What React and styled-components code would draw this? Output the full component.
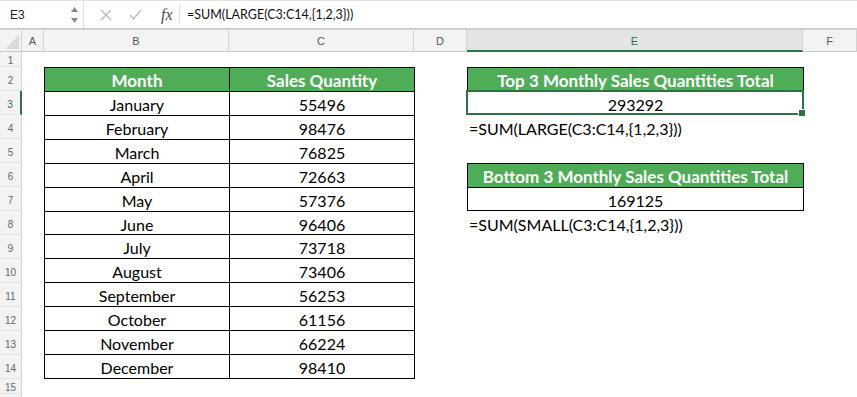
import React from "react";
import styled, { createGlobalStyle } from "styled-components";

const GlobalStyle = createGlobalStyle`
  html, body {
    margin: 0;
    padding: 0;
    background: #ffffff;
    overflow: hidden;
  }
  body {
    font-family: Lato, "Liberation Sans", sans-serif;
  }
`;

const months = [
  ["January", 55496],
  ["February", 98476],
  ["March", 76825],
  ["April", 72663],
  ["May", 57376],
  ["June", 96406],
  ["July", 73718],
  ["August", 73406],
  ["September", 56253],
  ["October", 61156],
  ["November", 66224],
  ["December", 98410],
];

const columns = ["A", "B", "C", "D", "E", "F"];
const rows = Array.from({ length: 16 }, (_, i) => i + 1);

export default function App() {
  return (
    <Page>
      <GlobalStyle />
      <FormulaBar>
        <NameBox>
          <span>E3</span>
          <Spinner width="9" height="18" viewBox="0 0 9 18">
            <path d="M4.5 1 L8 6 L1 6 Z" fill="#8a8a8a" />
            <path d="M4.5 17 L8 12 L1 12 Z" fill="#8a8a8a" />
          </Spinner>
        </NameBox>
        <BarIcons>
          <svg width="12" height="12" viewBox="0 0 12 12">
            <path d="M1 1 L11 11 M11 1 L1 11" stroke="#b8b8b8" strokeWidth="1.3" />
          </svg>
          <svg width="13" height="11" viewBox="0 0 13 11">
            <path d="M1 6 L4.5 10 L12 1" stroke="#b8b8b8" strokeWidth="1.3" fill="none" />
          </svg>
          <Fx>fx</Fx>
        </BarIcons>
        <FormulaText>=SUM(LARGE(C3:C14,{"{1,2,3}"}))</FormulaText>
      </FormulaBar>

      <Sheet>
        <Corner>
          <svg width="14" height="14" viewBox="0 0 14 14">
            <path d="M14 0 L14 14 L0 14 Z" fill="#d9d9d9" />
          </svg>
        </Corner>
        {columns.map((c) => (
          <ColHead key={c} $selected={c === "E"}>
            {c}
          </ColHead>
        ))}
        {rows.map((r) => (
          <RowHead key={r} $row={r + 1} $selected={r === 3}>
            {r < 16 ? r : ""}
          </RowHead>
        ))}

        <DataTable $cols="3 / 5" $rows="3 / 16" $count={13} $columns={2}>
          <HeadCell>Month</HeadCell>
          <HeadCell>Sales Quantity</HeadCell>
          {months.map(([m, q]) => (
            <React.Fragment key={m}>
              <Cell>{m}</Cell>
              <Cell>{q}</Cell>
            </React.Fragment>
          ))}
        </DataTable>

        <DataTable $cols="6 / 7" $rows="3 / 5" $count={2} $columns={1}>
          <HeadCell>Top 3 Monthly Sales Quantities Total</HeadCell>
          <Cell>293292</Cell>
        </DataTable>
        <Selection>
          <Handle />
        </Selection>
        <Formula $row={5}>=SUM(LARGE(C3:C14,{"{1,2,3}"}))</Formula>

        <DataTable $cols="6 / 7" $rows="7 / 9" $count={2} $columns={1}>
          <HeadCell>Bottom 3 Monthly Sales Quantities Total</HeadCell>
          <Cell>169125</Cell>
        </DataTable>
        <Formula $row={9}>=SUM(SMALL(C3:C14,{"{1,2,3}"}))</Formula>
      </Sheet>
    </Page>
  );
}

const Page = styled.div`
  width: 857px;
  height: 397px;
  overflow: hidden;
  background: #ffffff;
`;

const FormulaBar = styled.div`
  display: flex;
  align-items: stretch;
  border-top: 1px solid #e3e3e3;
  border-bottom: 1px solid #c9c9c9;
  box-sizing: border-box;
  height: 29px;
`;

const NameBox = styled.div`
  width: 84px;
  box-sizing: border-box;
  display: flex;
  align-items: center;
  justify-content: space-between;
  padding: 0 4px 0 10px;
  border-right: 1px solid #dcdcdc;
  font-family: "Liberation Sans", Arial, sans-serif;
  font-size: 12px;
  color: #222;
`;

const Spinner = styled.svg`
  display: block;
`;

const BarIcons = styled.div`
  width: 96px;
  box-sizing: border-box;
  display: flex;
  align-items: center;
  gap: 17px;
  padding-left: 16px;
  border-right: 1px solid #dcdcdc;
  margin: 4px 0;
`;

const Fx = styled.span`
  font-family: "Liberation Serif", serif;
  font-style: italic;
  font-size: 16px;
  color: #4a4a4a;
  margin-left: 2px;
`;

const FormulaText = styled.div`
  display: flex;
  align-items: center;
  padding-left: 7px;
  font-size: 12.5px;
  color: #111;
`;

const Sheet = styled.div`
  border-top: 1px solid #d6d6d6;
  display: grid;
  grid-template-columns: 22px 22px 185px 185px 53px 336px 54px;
  grid-template-rows: 22px 15px repeat(13, 24px) 15px 24px;
  height: 368px;
`;

const Corner = styled.div`
  grid-row: 1;
  grid-column: 1;
  background: #f3f3f3;
  border-right: 1px solid #d4d4d4;
  border-bottom: 1px solid #c8c8c8;
  display: flex;
  align-items: flex-end;
  justify-content: flex-end;
  padding: 0 2px 2px 0;
`;

const ColHead = styled.div`
  grid-row: 1;
  background: ${(p) => (p.$selected ? "#e4e4e4" : "#f3f3f3")};
  border-right: 1px solid #d4d4d4;
  border-bottom: ${(p) => (p.$selected ? "2px solid #2d7245" : "1px solid #c8c8c8")};
  display: flex;
  align-items: center;
  justify-content: center;
  font-family: "Liberation Sans", Arial, sans-serif;
  font-size: 11px;
  color: ${(p) => (p.$selected ? "#2d7245" : "#555")};
  padding-top: ${(p) => (p.$selected ? "1px" : "0")};
`;

const RowHead = styled.div`
  grid-column: 1;
  grid-row: ${(p) => p.$row};
  background: #f3f3f3;
  border-right: ${(p) => (p.$selected ? "2px solid #2d7245" : "1px solid #d4d4d4")};
  border-bottom: 1px solid #e2e2e2;
  display: flex;
  align-items: center;
  justify-content: center;
  font-family: "Liberation Sans", Arial, sans-serif;
  font-size: 10px;
  color: ${(p) => (p.$selected ? "#2d7245" : "#666")};
  padding-top: 3px;
`;

const DataTable = styled.div`
  grid-column: ${(p) => p.$cols};
  grid-row: ${(p) => p.$rows};
  display: grid;
  grid-template-columns: repeat(${(p) => p.$columns}, 1fr);
  grid-template-rows: repeat(${(p) => p.$count}, 1fr);
  border-top: 1px solid #000;
  border-left: 1px solid #000;
  margin-right: -1px;
  box-sizing: border-box;
`;

const Cell = styled.div`
  border-right: 1px solid #000;
  border-bottom: 1px solid #000;
  display: flex;
  align-items: center;
  justify-content: center;
  font-size: 16px;
  color: #000;
  padding-top: 2px;
  white-space: nowrap;
`;

const HeadCell = styled(Cell)`
  background: #4fad58;
  color: #ffffff;
  font-weight: 700;
  font-size: 17px;
`;

const Selection = styled.div`
  grid-column: 6;
  grid-row: 4;
  position: relative;
  border: 2px solid #2d7245;
  margin: -1px -1px 0 -1px;
  z-index: 2;
`;

const Handle = styled.div`
  position: absolute;
  right: -4px;
  bottom: -4px;
  width: 6px;
  height: 6px;
  background: #2d7245;
  border: 1px solid #fff;
`;

const Formula = styled.div`
  grid-column: 6 / 8;
  grid-row: ${(p) => p.$row};
  display: flex;
  align-items: center;
  padding-left: 2px;
  padding-top: 2px;
  font-size: 16px;
  color: #000;
  white-space: nowrap;
`;
